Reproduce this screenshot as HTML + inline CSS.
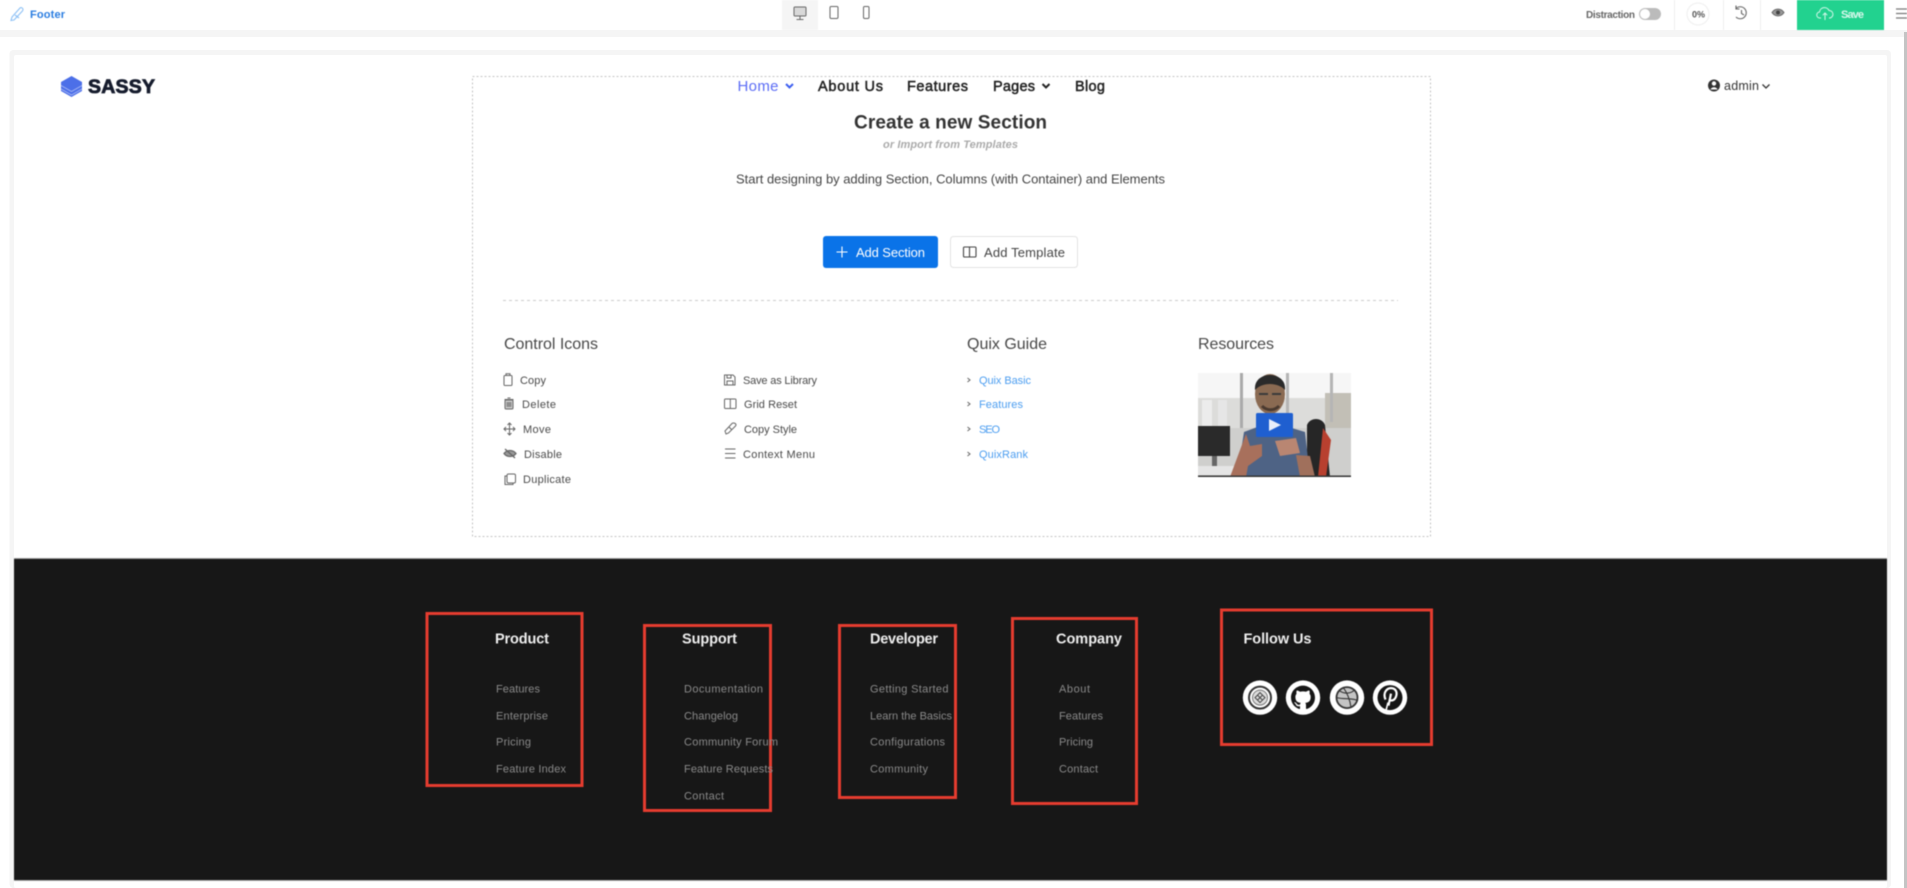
<!DOCTYPE html>
<html><head><meta charset="utf-8"><title>Footer</title>
<style>
html,body{margin:0;padding:0;width:1907px;height:888px;overflow:hidden;background:#fff}
svg{display:block}
text{font-family:"Liberation Sans",sans-serif}
.g{filter:blur(.45px)}
.li{font-size:11px;fill:#4a4a4a}
.lk{font-size:11px;fill:#4b9df0}
.ft{font-size:11px;fill:#8a8a8a}
.th{font-size:14.5px;font-weight:700;fill:#eee}
.h{font-size:16px;fill:#484848}
.nav{font-size:14.5px;fill:#222;stroke:#222;stroke-width:.5}
.ic{fill:none;stroke:#666;stroke-width:1}
.rb{fill:none;stroke:#e53c2f;stroke-width:3}
</style></head><body>
<svg width="1907" height="888" viewBox="0 0 1907 888" xmlns="http://www.w3.org/2000/svg">
<rect width="1907" height="888" fill="#fff"/>
<!-- toolbar shadow and panel frame -->
<rect x="0" y="30" width="1907" height="7" fill="#f5f5f5"/>
<rect x="9.500" y="50" width="1881.500" height="838" rx="4" fill="#f5f5f5"/>
<rect x="14" y="55" width="1873" height="833" rx="2" fill="#fff"/>
<rect x="1904" y="32" width="3" height="856" fill="#c4c4c4"/>
<g class="g">
<!-- toolbar -->
<rect x="782" y="0" width="36" height="30" fill="#f5f5f5"/>
<path d="M12 19 L20 10 C21 9 23 10 23 11.500 C23 12 22.800 12.500 22.400 13 L14 22 L11 22.500 Z M15 17 L19 20" fill="none" stroke="#8cc0f5" stroke-width="1.100" transform="translate(0,-2)"/>
<text x="30" y="18" font-size="11" font-weight="700" fill="#2a7de1" textLength="35" lengthAdjust="spacing">Footer</text>
<g class="ic">
<rect x="794" y="7" width="12" height="9" rx="1" fill="#d8d8d8"/><path d="M800 16V19M796.500 19.500H803.500"/>
<rect x="830" y="6.500" width="8" height="12" rx="1.200"/>
<rect x="863.500" y="6.500" width="5.500" height="12" rx="1.200"/>
</g>
<text x="1586" y="18" font-size="10" font-weight="700" fill="#666" textLength="49" lengthAdjust="spacing">Distraction</text>
<rect x="1639" y="8" width="22" height="12" rx="6" fill="#bbb"/><circle cx="1645" cy="14" r="5" fill="#fff"/>
<g fill="#eee"><rect x="1674" y="0" width="1" height="30"/><rect x="1723" y="0" width="1" height="30"/><rect x="1760" y="0" width="1" height="30"/></g>
<circle cx="1698" cy="14" r="11" fill="#fff" stroke="#eee"/>
<text x="1692" y="17.500" font-size="9" font-weight="700" fill="#555" textLength="13" lengthAdjust="spacing">0%</text>
<path d="M1736 8.500 A6 6 0 1 1 1736 17 M1736 5.500V9H1739.500 M1741.500 10V13.500L1744 15" fill="none" stroke="#666" stroke-width="1.100"/>
<path d="M1772 12.500C1775 8 1781 8 1784 12.500C1781 17 1775 17 1772 12.500Z" fill="#999" stroke="#666"/><circle cx="1778" cy="12.500" r="2" fill="#444"/>
<rect x="1797" y="0" width="87" height="30" fill="#22d28f"/>
<path d="M1821 18H1820A3 3 0 0 1 1819.500 12A5 5 0 0 1 1829 10.500A3.800 3.800 0 0 1 1830 18H1829 M1825 20V13M1822.800 15.200L1825 13L1827.200 15.200" fill="none" stroke="#d4f7ea" stroke-width="1"/>
<text x="1841" y="18" font-size="11" font-weight="700" fill="#d9f8ec" textLength="23" lengthAdjust="spacing">Save</text>
<path d="M1896 9H1907M1896 13.500H1907M1896 18H1907" stroke="#777" stroke-width="1.200"/>

<!-- logo -->
<path d="M71.500 76L82 82V91L71.500 97L61 91V82Z" fill="#4c6fe8"/>
<path d="M61 85.500L71.500 91.500L82 85.500M61 89L71.500 95L82 89" fill="none" stroke="#a9b9f5" stroke-width=".9"/>
<text x="88" y="93" font-size="19.500" font-weight="700" fill="#161c2d" stroke="#161c2d" stroke-width=".8" textLength="67" lengthAdjust="spacing">SASSY</text>

<!-- dashed builder box -->
<rect x="472.500" y="76.500" width="958" height="460" fill="none" stroke="#c4c4c4" stroke-dasharray="2 2"/>
<line x1="503" y1="300.500" x2="1398" y2="300.500" stroke="#ccc" stroke-dasharray="3 3"/>

<!-- nav -->
<text x="737.500" y="91" font-size="15" fill="#5b6cf5" textLength="41" lengthAdjust="spacing">Home</text>
<path d="M786 84L789.500 87.500L793 84" fill="none" stroke="#3d5ff0" stroke-width="2"/>
<text class="nav" x="818" y="91" textLength="65" lengthAdjust="spacing">About Us</text>
<text class="nav" x="907" y="91" textLength="61" lengthAdjust="spacing">Features</text>
<text class="nav" x="993" y="91" textLength="42" lengthAdjust="spacing">Pages</text>
<path d="M1042.500 84L1046 87.500L1049.500 84" fill="none" stroke="#222" stroke-width="2"/>
<text class="nav" x="1075" y="91" textLength="30" lengthAdjust="spacing">Blog</text>
<circle cx="1714" cy="85.500" r="6" fill="#333"/><circle cx="1714" cy="83.500" r="2.200" fill="#fff"/><path d="M1710.500 89.500C1711.500 86.500 1716.500 86.500 1717.500 89.500" fill="#fff"/>
<text x="1724" y="90" font-size="12.500" fill="#333" textLength="35" lengthAdjust="spacing">admin</text>
<path d="M1762.500 84.500L1766 88L1769.500 84.500" fill="none" stroke="#333" stroke-width="1.300"/>

<!-- intro -->
<text x="854" y="128.500" font-size="19" font-weight="700" fill="#333" textLength="193" lengthAdjust="spacing">Create a new Section</text>
<text x="883" y="148" font-size="11" font-weight="700" font-style="italic" fill="#aaa" textLength="135" lengthAdjust="spacing">or Import from Templates</text>
<text x="736" y="183.500" font-size="13" fill="#444" textLength="429" lengthAdjust="spacing">Start designing by adding Section, Columns (with Container) and Elements</text>

<!-- buttons -->
<rect x="823" y="236" width="115" height="32" rx="3" fill="#0a73e8"/>
<path d="M836.500 252H847.500M842 246.500V257.500" stroke="#fff" stroke-width="1.100"/>
<text x="856" y="257" font-size="13" fill="#fff" textLength="69" lengthAdjust="spacing">Add Section</text>
<rect x="950.500" y="236.500" width="127" height="31" rx="3" fill="#fff" stroke="#e3e3e3"/>
<rect x="963.500" y="247" width="12.500" height="10" rx="1" fill="none" stroke="#444" stroke-width="1.100"/><path d="M969.500 247V257" stroke="#444" stroke-width="1.100"/>
<text x="984" y="257" font-size="13" fill="#444" textLength="81" lengthAdjust="spacing">Add Template</text>

<!-- headings -->
<text class="h" x="504" y="349" textLength="94" lengthAdjust="spacing">Control Icons</text>
<text class="h" x="967" y="349" textLength="80" lengthAdjust="spacing">Quix Guide</text>
<text class="h" x="1198" y="349" textLength="76" lengthAdjust="spacing">Resources</text>

<!-- control list col 1 -->
<g class="ic">
<rect x="504" y="375.500" width="8" height="10" rx="1"/><path d="M506 375V373.800H510V375"/>
<rect x="505" y="400" width="8" height="9" rx="1" fill="#ccc"/><path d="M504.500 399.500H513.500M507.500 398H510.500M507.300 402V407M509 402V407M510.700 402V407"/>
<path d="M504 429H515M509.500 423.500V434.500M507.500 425L509.500 423L511.500 425M507.500 433L509.500 435L511.500 433M506 427L504 429L506 431M513 427L515 429L513 431"/>
<path d="M504 453.500C507 449.500 513 449.500 516 453.500C513 457.500 507 457.500 504 453.500ZM505 449L515 458" fill="#999" stroke-width="1.300"/>
<rect x="507" y="474" width="8.500" height="9" rx="1.500"/><path d="M507 476H505V484.500H513V483" />
</g>
<text class="li" x="520" y="384" textLength="26" lengthAdjust="spacing">Copy</text>
<text class="li" x="522" y="408" textLength="34" lengthAdjust="spacing">Delete</text>
<text class="li" x="523" y="433" textLength="28" lengthAdjust="spacing">Move</text>
<text class="li" x="524" y="458" textLength="38" lengthAdjust="spacing">Disable</text>
<text class="li" x="523" y="483" textLength="48" lengthAdjust="spacing">Duplicate</text>

<!-- control list col 2 -->
<g class="ic">
<path d="M724.500 375H733L735 377V385H724.500Z M727 375V378H731V375M727 385V381H733V385"/>
<rect x="724.500" y="399" width="11.500" height="9.500" rx="1"/><path d="M730.300 399V408.500"/>
<path d="M726 434L725 431L732 423.500C733 422.500 736 423 736 425C736 425.500 735.500 426 735 426.500L728.500 433ZM729 427L732 430"/>
<path d="M725 449H735.500M725 453.500H735.500M725 458H735.500"/>
</g>
<text class="li" x="743" y="384" textLength="74" lengthAdjust="spacing">Save as Library</text>
<text class="li" x="744" y="408" textLength="53" lengthAdjust="spacing">Grid Reset</text>
<text class="li" x="744" y="433" textLength="53" lengthAdjust="spacing">Copy Style</text>
<text class="li" x="743" y="458" textLength="72" lengthAdjust="spacing">Context Menu</text>

<!-- quix guide -->
<path d="M967.500 378L970 380L967.500 382M967.500 402L970 404L967.500 406M967.500 427L970 429L967.500 431M967.500 452L970 454L967.500 456" fill="none" stroke="#666"/>
<text class="lk" x="979" y="384" textLength="52" lengthAdjust="spacing">Quix Basic</text>
<text class="lk" x="979" y="408" textLength="44" lengthAdjust="spacing">Features</text>
<text class="lk" x="979" y="433" textLength="21" lengthAdjust="spacing">SEO</text>
<text class="lk" x="979" y="458" textLength="49" lengthAdjust="spacing">QuixRank</text>

<!-- video thumbnail -->
<g>
<clipPath id="c"><rect x="1198" y="373" width="153" height="104"/></clipPath>
<g clip-path="url(#c)">
<rect x="1198" y="373" width="153" height="104" fill="#f6f6f6"/>
<rect x="1198" y="398" width="153" height="30" fill="#dcdcda"/>
<rect x="1202" y="400" width="10" height="26" fill="#ececec"/><rect x="1218" y="400" width="9" height="26" fill="#e6e6e6"/>
<rect x="1325" y="393" width="26" height="42" fill="#c2bfb6"/>
<rect x="1240" y="372" width="3" height="60" fill="#aaa"/><rect x="1286" y="372" width="3" height="50" fill="#b5b5b5"/><rect x="1330" y="372" width="3" height="50" fill="#b5b5b5"/>
<rect x="1198" y="428" width="153" height="49" fill="#cfcfcd"/>
<rect x="1198" y="426" width="32" height="30" fill="#2a2a2a"/>
<rect x="1212" y="456" width="5" height="14" fill="#666"/>
<rect x="1198" y="466" width="42" height="9" fill="#e5e5e5"/>
<path d="M1307 477V425C1310 417 1322 417 1325 425L1330 477Z" fill="#262626"/>
<path d="M1323 428L1331 440L1326 477H1318Z" fill="#b8402f"/>
<path d="M1237 477L1244 432L1260 426H1285L1305 432L1310 477Z" fill="#4e6385"/>
<ellipse cx="1270" cy="394" rx="15" ry="20" fill="#8a6a52"/>
<path d="M1255 390C1253 370 1287 370 1285 390C1278 382 1262 382 1255 390Z" fill="#2a2a2a"/>
<path d="M1259 394H1268M1272 394H1281" stroke="#3a3a3a" stroke-width="2"/>
<path d="M1262 406C1267 411 1274 411 1279 406" stroke="#4a3a30" stroke-width="3" fill="none"/>
<path d="M1230 477L1240 450L1246 434L1250 446L1262 444L1262 456L1248 466L1246 477Z" fill="#a8705c"/>
<path d="M1275 441L1296 438L1300 453L1280 456Z" fill="#b98672"/>
<path d="M1296 455L1310 456L1315 477H1300Z" fill="#a0705c"/>
<rect x="1256" y="413" width="37" height="24" rx="1.500" fill="#1f5fd0"/>
<path d="M1269 419L1281 425L1269 431Z" fill="#e8eefa"/>
<rect x="1198" y="475.500" width="153" height="1.500" fill="#333"/>
</g></g>

<!-- footer -->
<rect x="14" y="559" width="1873" height="321" fill="#171717"/>
<rect x="14" y="558" width="1873" height="1" fill="#999"/>
<rect x="14" y="880" width="1873" height="1" fill="#aaa"/>
<rect class="rb" x="427" y="613.500" width="155" height="172"/>
<rect class="rb" x="644.500" y="625.500" width="126" height="185"/>
<rect class="rb" x="839.500" y="625.500" width="116" height="172"/>
<rect class="rb" x="1012.500" y="618.500" width="124" height="185"/>
<rect class="rb" x="1221.500" y="610" width="210" height="134.500"/>

<text class="th" x="495" y="643.300" textLength="54" lengthAdjust="spacing">Product</text>
<text class="th" x="682" y="643.300" textLength="55" lengthAdjust="spacing">Support</text>
<text class="th" x="870" y="643.300" textLength="68" lengthAdjust="spacing">Developer</text>
<text class="th" x="1056" y="643.300" textLength="66" lengthAdjust="spacing">Company</text>
<text class="th" x="1243.500" y="643.300" textLength="68" lengthAdjust="spacing">Follow Us</text>

<text class="ft" x="496" y="692.600" textLength="44" lengthAdjust="spacing">Features</text>
<text class="ft" x="496" y="719.600" textLength="52" lengthAdjust="spacing">Enterprise</text>
<text class="ft" x="496" y="745.400" textLength="35" lengthAdjust="spacing">Pricing</text>
<text class="ft" x="496" y="772.400" textLength="70" lengthAdjust="spacing">Feature Index</text>

<text class="ft" x="684" y="692.600" textLength="79" lengthAdjust="spacing">Documentation</text>
<text class="ft" x="684" y="719.600" textLength="54" lengthAdjust="spacing">Changelog</text>
<text class="ft" x="684" y="745.400" textLength="94" lengthAdjust="spacing">Community Forum</text>
<text class="ft" x="684" y="772.400" textLength="89" lengthAdjust="spacing">Feature Requests</text>
<text class="ft" x="684" y="799.400" textLength="40" lengthAdjust="spacing">Contact</text>

<text class="ft" x="870" y="692.600" textLength="78.500" lengthAdjust="spacing">Getting Started</text>
<text class="ft" x="870" y="719.600" textLength="82" lengthAdjust="spacing">Learn the Basics</text>
<text class="ft" x="870" y="745.400" textLength="75" lengthAdjust="spacing">Configurations</text>
<text class="ft" x="870" y="772.400" textLength="58" lengthAdjust="spacing">Community</text>

<text class="ft" x="1059" y="692.600" textLength="31" lengthAdjust="spacing">About</text>
<text class="ft" x="1059" y="719.600" textLength="44" lengthAdjust="spacing">Features</text>
<text class="ft" x="1059" y="745.400" textLength="34" lengthAdjust="spacing">Pricing</text>
<text class="ft" x="1059" y="772.400" textLength="39" lengthAdjust="spacing">Contact</text>

<!-- social -->
<g transform="translate(0,-2.400)">
<circle cx="1260" cy="700" r="17.200" fill="#fff"/>
<circle cx="1303" cy="700" r="17.200" fill="#fff"/>
<circle cx="1347" cy="700" r="17.200" fill="#fff"/>
<circle cx="1390" cy="700" r="17.200" fill="#fff"/>
<circle cx="1260" cy="700" r="11" fill="none" stroke="#333" stroke-width="2"/>
<circle cx="1260" cy="700" r="7.500" fill="#ddd" stroke="#777" stroke-width="1"/>
<path d="M1260 695L1265 700L1260 705L1255 700Z M1257.500 697.500L1262.500 702.500M1262.500 697.500L1257.500 702.500" fill="none" stroke="#444"/>
<path transform="translate(1291,688) scale(1.5)" fill="#161616" d="M8 0C3.580 0 0 3.580 0 8c0 3.540 2.290 6.530 5.470 7.590.4.070.55-.17.55-.38 0-.19-.01-.82-.01-1.490-2.010.37-2.530-.49-2.690-.94-.09-.23-.48-.94-.82-1.130-.28-.15-.68-.52-.01-.53.63-.01 1.080.58 1.230.82.72 1.210 1.870.87 2.330.66.070-.52.28-.87.51-1.070-1.780-.2-3.640-.89-3.640-3.950 0-.87.31-1.590.82-2.150-.08-.2-.36-1.020.08-2.120 0 0 .67-.21 2.200.82.64-.18 1.320-.27 2-.27.68 0 1.360.09 2 .27 1.530-1.040 2.200-.82 2.200-.82.44 1.100.16 1.920.08 2.120.51.56.82 1.270.82 2.150 0 3.070-1.870 3.750-3.650 3.950.29.25.54.73.54 1.480 0 1.070-.01 1.930-.01 2.200 0 .21.15.46.55.38A8.013 8.013 0 0016 8c0-4.420-3.580-8-8-8z"/>
<circle cx="1347" cy="700" r="10.500" fill="#c4c4c4" stroke="#333" stroke-width="1.800"/>
<path d="M1339 693C1345 697 1351 696 1355 692M1336.500 700C1345 702 1352 700 1358 703M1343 689.500C1347 695 1350 702 1351 710" fill="none" stroke="#333" stroke-width="1.100"/>
<circle cx="1390" cy="700" r="12.500" fill="#141414"/>
<path d="M1388.500 708L1391 696M1385.500 702C1382.500 695 1387 690.500 1391 690.500C1396 690.500 1397.500 695 1396 699C1394.500 703 1390.500 704 1389.500 701.500" fill="none" stroke="#fff" stroke-width="2.200"/>
<path d="M1388 705L1386 713" stroke="#fff" stroke-width="1.600"/>
</g>
</g>
</svg>
</body></html>
